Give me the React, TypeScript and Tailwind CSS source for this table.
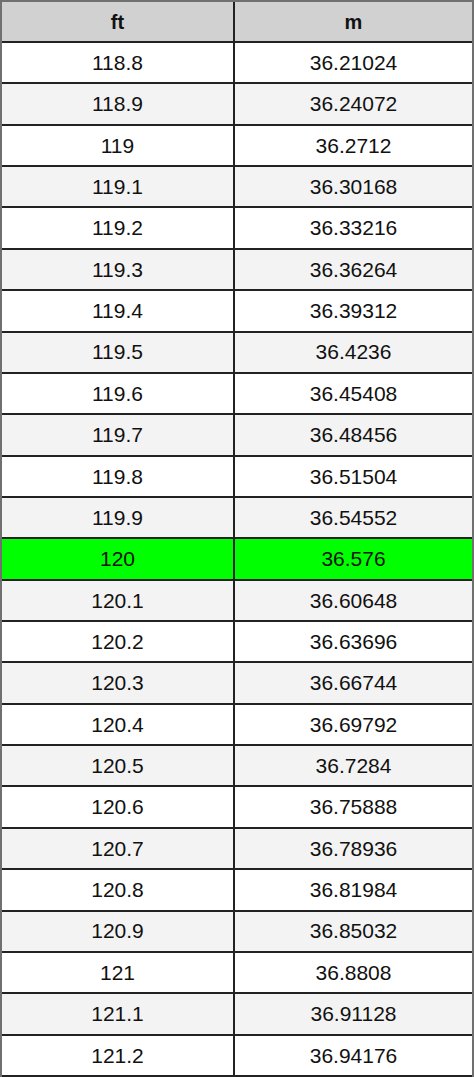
import React from 'react';

// ft -> m conversion table, highlighted row for 120 ft
const FT_VALUES = [
  '118.8', '118.9', '119', '119.1', '119.2', '119.3', '119.4', '119.5', '119.6', '119.7',
  '119.8', '119.9', '120', '120.1', '120.2', '120.3', '120.4', '120.5', '120.6', '120.7',
  '120.8', '120.9', '121', '121.1', '121.2',
];

const M_VALUES = [
  '36.21024', '36.24072', '36.2712', '36.30168', '36.33216', '36.36264', '36.39312', '36.4236',
  '36.45408', '36.48456', '36.51504', '36.54552', '36.576', '36.60648', '36.63696', '36.66744',
  '36.69792', '36.7284', '36.75888', '36.78936', '36.81984', '36.85032', '36.8808', '36.91128',
  '36.94176',
];

export default function App() {
  return (
    <div
      className="w-[474px] h-[1077px] flex flex-col bg-white text-[#111] border-x-2 border-t-2 border-[#707070]"
      style={{ fontFamily: '"Liberation Sans", Arial, sans-serif' }}
    >
      {/* Header */}
      <div className="h-[41px] shrink-0 flex bg-[#d1d1d1] border-b-2 border-[#222] text-[20px] font-bold">
        <div className="w-[233px] flex items-center justify-center border-r-2 border-[#222]">ft</div>
        <div className="flex-1 flex items-center justify-center">m</div>
      </div>

      {/* Rows */}
      {FT_VALUES.map((ft, i) => {
        const isHit = ft === '120';
        const bg = isHit ? 'bg-[#00ff00]' : i % 2 === 1 ? 'bg-[#f3f3f3]' : 'bg-white';
        return (
          <div key={ft} className={`flex-1 flex border-b-2 border-[#222] text-[21px] ${bg}`}>
            <div className="w-[233px] flex items-center justify-center border-r-2 border-[#222]">{ft}</div>
            <div className="flex-1 flex items-center justify-center">{M_VALUES[i]}</div>
          </div>
        );
      })}
    </div>
  );
}
